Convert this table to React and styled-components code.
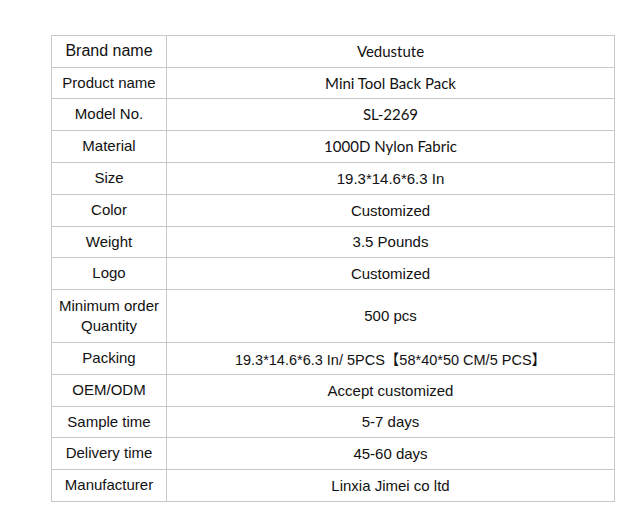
import React from "react";
import styled, { createGlobalStyle } from "styled-components";

const Global = createGlobalStyle`
  html, body { margin: 0; padding: 0; background: #fff; }
  body { font-family: "Liberation Sans", Arial, sans-serif; color: #111; }
`;

const Page = styled.div`
  padding: 35px 0 0 51px;
`;

const Table = styled.div`
  width: 562px;
  border-left: 1px solid #c8c8c8;
  border-right: 1px solid #c8c8c8;
  border-bottom: 1px solid #c8c8c8;
`;

const Row = styled.div`
  display: grid;
  grid-template-columns: 115px 1fr;
  height: ${(p) => p.$h}px;
  box-sizing: border-box;
  border-top: 1px solid #c8c8c8;
`;

const Label = styled.div`
  display: flex;
  align-items: center;
  justify-content: center;
  text-align: center;
  box-sizing: border-box;
  padding-bottom: 1px;
  border-right: 1px solid #c8c8c8;
  font-family: "Liberation Sans", Arial, sans-serif;
  font-size: ${(p) => p.$size || 15}px;
  line-height: 20px;
  color: #111;
`;

const Value = styled.div`
  display: flex;
  align-items: center;
  justify-content: center;
  text-align: center;
  box-sizing: border-box;
  padding-bottom: 1px;
  font-family: ${(p) =>
    p.$calibri
      ? `Lato, "Open Sans", sans-serif`
      : `"Liberation Sans", Arial, "Noto Sans CJK SC", sans-serif`};
  font-size: ${(p) => p.$size || 15}px;
  color: #111;
  white-space: nowrap;
`;

const rows = [
  { l: "Brand name", ls: 16, v: "Vedustute", h: 32, c: true },
  { l: "Product name", v: "Mini Tool Back Pack", h: 31, c: true },
  { l: "Model No.", v: "SL-2269", h: 32, c: true },
  { l: "Material", v: "1000D Nylon Fabric", h: 32, c: true },
  { l: "Size", v: "19.3*14.6*6.3 In", h: 32 },
  { l: "Color", v: "Customized", h: 32 },
  { l: "Weight", v: "3.5 Pounds", h: 31 },
  { l: "Logo", v: "Customized", h: 32 },
  { l: ["Minimum order", "Quantity"], v: "500 pcs", h: 53 },
  { l: "Packing", v: "19.3*14.6*6.3 In/ 5PCS【58*40*50 CM/5 PCS】", vs: 14.5, h: 32 },
  { l: "OEM/ODM", v: "Accept customized", h: 32 },
  { l: "Sample time", v: "5-7 days", h: 31 },
  { l: "Delivery time", v: "45-60 days", h: 32 },
  { l: "Manufacturer", v: "Linxia Jimei co ltd", h: 32 },
];

export default function App() {
  return (
    <>
      <Global />
      <Page>
        <Table>
          {rows.map((r, i) => (
            <Row key={i} $h={r.h}>
              <Label $size={r.ls}>
                {Array.isArray(r.l) ? (
                  <span>
                    {r.l[0]}
                    <br />
                    {r.l[1]}
                  </span>
                ) : (
                  r.l
                )}
              </Label>
              <Value $calibri={r.c} $size={r.vs}>
                {r.v}
              </Value>
            </Row>
          ))}
        </Table>
      </Page>
    </>
  );
}
